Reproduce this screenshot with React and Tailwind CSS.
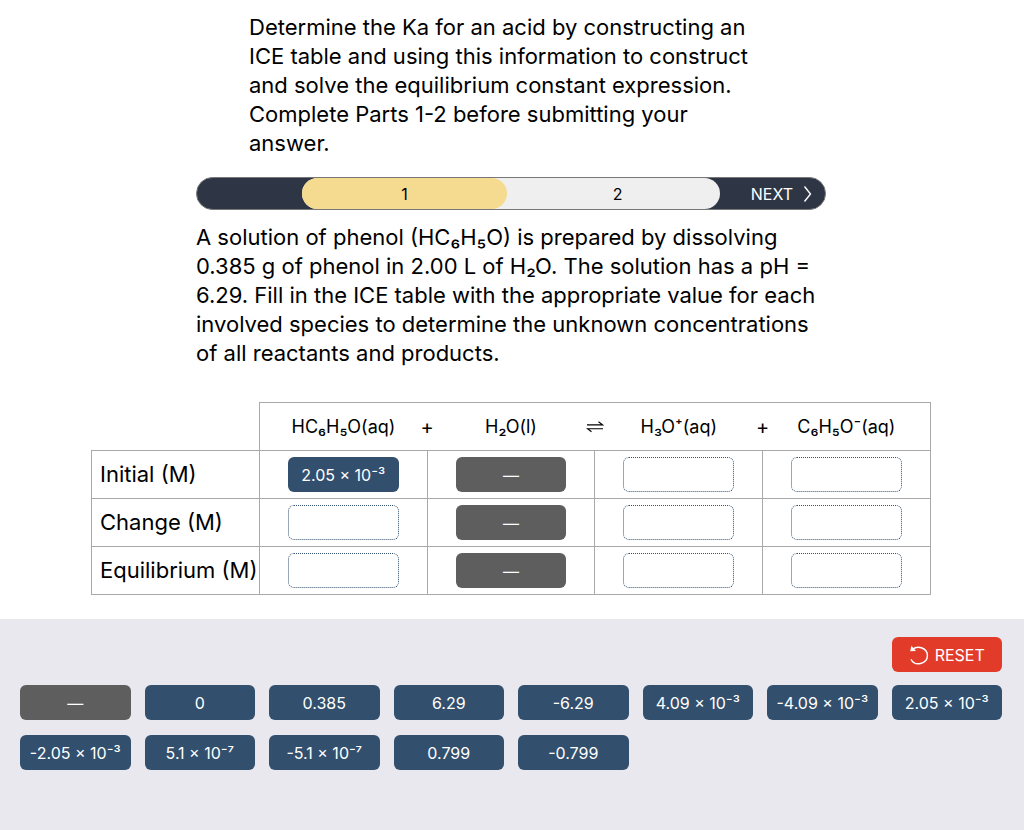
import React, { useState } from "react";

const TILES = [
  "—",
  "0",
  "0.385",
  "6.29",
  "-6.29",
  "4.09 × 10⁻³",
  "-4.09 × 10⁻³",
  "2.05 × 10⁻³",
  "-2.05 × 10⁻³",
  "5.1 × 10⁻⁷",
  "-5.1 × 10⁻⁷",
  "0.799",
  "-0.799",
];

const SPECIES = ["HC₆H₅O(aq)", "H₂O(l)", "H₃O⁺(aq)", "C₆H₅O⁻(aq)"];
const ROWS = ["Initial (M)", "Change (M)", "Equilibrium (M)"];

const START = [
  ["2.05 × 10⁻³", "—", "", ""],
  ["", "—", "", ""],
  ["", "—", "", ""],
];

function EquilibriumArrows() {
  return (
    <svg width="18" height="12" viewBox="0 0 18 12" fill="none" stroke="black" strokeWidth="1.1">
      <path d="M1 3.9H16.5L12.5 0.8" />
      <path d="M17 7.7H1.5L5.5 10.8" />
    </svg>
  );
}

function ResetIcon() {
  return (
    <svg width="20" height="20" viewBox="0 0 20 20" fill="none" stroke="white" strokeWidth="1.4">
      <path d="M3.5 4.4C9 0 18.4 3 18.4 10.6C18.4 19.5 5.5 21.6 2 14.2" />
      <path d="M2.4 0.8L1.2 6.2L7 6Z" fill="white" stroke="none" />
    </svg>
  );
}

function Tile({ value, selected, onClick }) {
  const color = value === "—" ? "bg-[#5e5e5e]" : "bg-[#324f6e]";
  return (
    <button
      onClick={onClick}
      className={`h-[35px] w-full rounded-md text-base text-white ${color} ${selected ? "ring-2 ring-[#f5db8f]" : ""}`}
    >
      {value}
    </button>
  );
}

function IceTable({ cells, onPlace }) {
  // signs that sit on the line between two species
  const signs = ["+", <EquilibriumArrows />, "+"];

  return (
    <table className="w-full max-w-[840px] table-fixed border-collapse">
      <thead>
        <tr className="h-12">
          <td />
          {SPECIES.map((name, i) => (
            <th
              key={name}
              scope="col"
              className={`relative border-y border-[#a9a9a9] p-0 text-lg font-normal ${i === 0 ? "border-l" : ""} ${i === 3 ? "border-r" : ""}`}
            >
              {name}
              {i < 3 && (
                <span className="absolute inset-y-0 right-0 flex w-5 translate-x-1/2 items-center justify-center text-xl">
                  {signs[i]}
                </span>
              )}
            </th>
          ))}
        </tr>
      </thead>
      <tbody>
        {ROWS.map((label, r) => (
          <tr key={label} className="h-12">
            <th
              scope="row"
              className="border border-[#a9a9a9] py-0 pr-0 pl-2 text-left text-[22px] font-normal whitespace-nowrap"
            >
              {label}
            </th>
            {cells[r].map((value, c) => (
              <td key={c} className="border border-[#a9a9a9] px-7 py-0">
                <div className="flex">
                  {value ? (
                    <Tile value={value} onClick={() => onPlace(r, c)} />
                  ) : (
                    <button
                      aria-label={`${label} ${SPECIES[c]}`}
                      onClick={() => onPlace(r, c)}
                      className="h-[35px] w-full rounded-md border border-dotted border-[#324f6e]"
                    />
                  )}
                </div>
              </td>
            ))}
          </tr>
        ))}
      </tbody>
    </table>
  );
}

function App() {
  const [part, setPart] = useState(1);
  const [cells, setCells] = useState(START);
  const [selected, setSelected] = useState(null);

  const placeTile = (row, col) => {
    setCells(
      cells.map((line, r) =>
        line.map((value, c) => (r === row && c === col ? selected ?? "" : value))
      )
    );
    setSelected(null);
  };

  const reset = () => {
    setCells(START);
    setSelected(null);
  };

  const steps = [1, 2];

  return (
    <div className="flex min-h-screen flex-col bg-white font-['Inter',sans-serif] text-black">
      <main className="flex flex-col items-center pt-[13px] pr-[18px] pb-6 pl-4">
        <h1 className="w-full max-w-[524px] text-[22px] leading-[29px]">
          Determine the Ka for an acid by constructing an ICE table and using this information to
          construct and solve the equilibrium constant expression. Complete Parts 1-2 before
          submitting your answer.
        </h1>

        <nav className="mt-[19px] flex h-[33px] w-full max-w-[630px] rounded-full border border-[#777777] bg-[#2e3646] text-base">
          <div className="w-[105px]" />
          <div className="flex flex-1 justify-between rounded-full bg-[#efefef]">
            {steps.map((n) => (
              <button
                key={n}
                onClick={() => setPart(n)}
                className={`w-[49%] rounded-full ${part === n ? "bg-[#f5db8f]" : ""}`}
              >
                {n}
              </button>
            ))}
          </div>
          <button
            onClick={() => setPart(2)}
            className="flex w-[105px] items-center justify-end gap-2.5 pr-[13px] text-white"
          >
            NEXT
            <svg width="9" height="18" viewBox="0 0 9 18" fill="none" stroke="white" strokeWidth="1.4">
              <path d="M1.5 1.5L7.5 9L1.5 16.5" />
            </svg>
          </button>
        </nav>

        <p className="mt-[13px] w-full max-w-[630px] text-[22px] leading-[29px]">
          A solution of phenol (HC₆H₅O) is prepared by dissolving 0.385 g of phenol in 2.00 L of
          H₂O. The solution has a pH = 6.29. Fill in the ICE table with the appropriate value for
          each involved species to determine the unknown concentrations of all reactants and
          products.
        </p>

        <div className="mt-[34px] flex w-full justify-center">
          <IceTable cells={cells} onPlace={placeTile} />
        </div>
      </main>

      <section className="flex-1 bg-[#e9e8ee] pt-[18px] pr-[22px] pb-6 pl-5">
        <div className="grid grid-cols-8 gap-x-3.5">
          <button
            onClick={reset}
            className="col-start-8 flex h-[35px] items-center justify-center gap-1.5 rounded-md bg-[#e33b29] text-base text-white"
          >
            <ResetIcon />
            RESET
          </button>
        </div>
        <div className="mt-[13px] grid grid-cols-8 gap-x-3.5 gap-y-[15px]">
          {TILES.map((value) => (
            <Tile
              key={value}
              value={value}
              selected={selected === value}
              onClick={() => setSelected(value)}
            />
          ))}
        </div>
      </section>
    </div>
  );
}

export default App;
